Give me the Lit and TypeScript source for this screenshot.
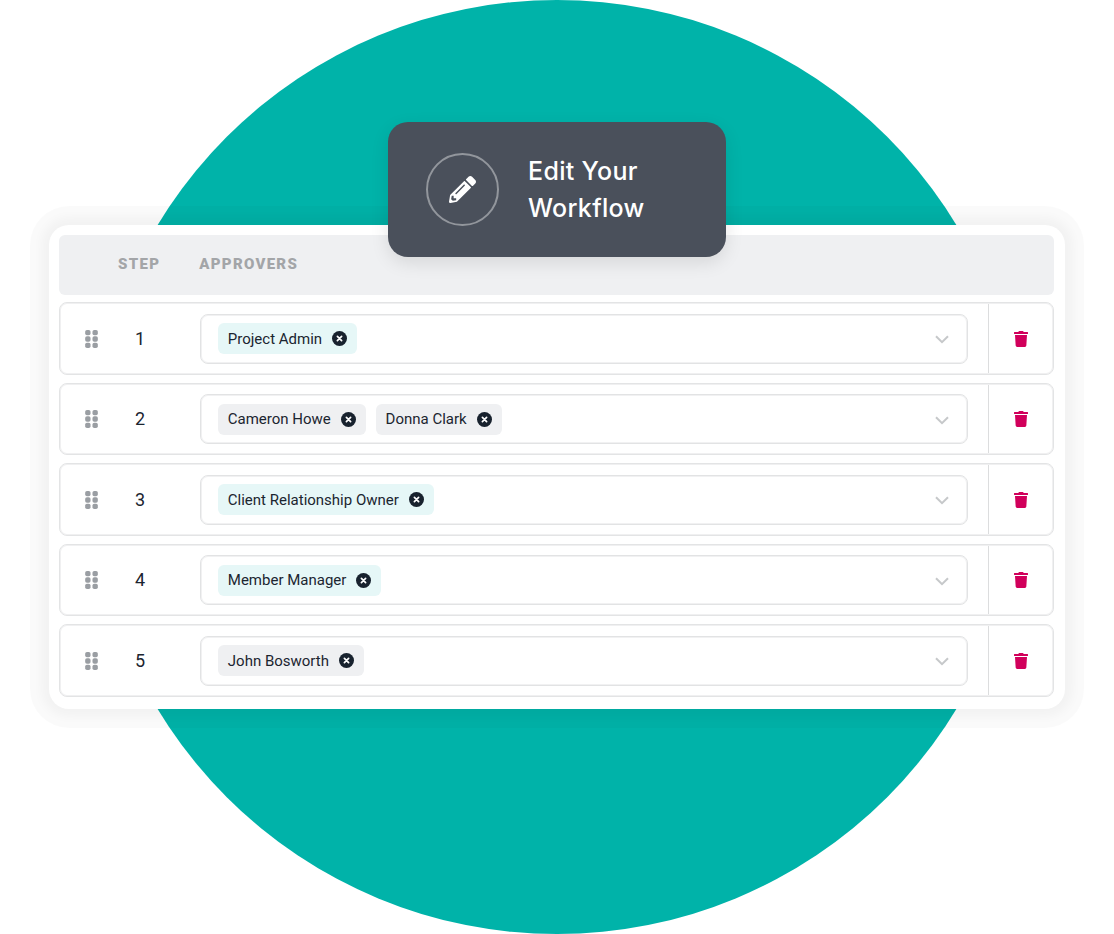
import { LitElement, html, css, svg } from "lit";
import { customElement } from "lit/decorators.js";

interface Chip { name: string; teal: boolean; }
const ROWS: Chip[][] = [
  [{ name: "Project Admin", teal: true }],
  [{ name: "Cameron Howe", teal: false }, { name: "Donna Clark", teal: false }],
  [{ name: "Client Relationship Owner", teal: true }],
  [{ name: "Member Manager", teal: true }],
  [{ name: "John Bosworth", teal: false }],
];

const PENCIL = "M497.9 142.1l-46.1 46.1c-4.7 4.7-12.3 4.7-17 0l-111-111c-4.7-4.7-4.7-12.3 0-17l46.1-46.1c18.7-18.7 49.1-18.7 67.9 0l60.1 60.1c18.8 18.7 18.8 49.1 0 67.9zM284.2 99.8L21.6 362.4.4 483.9c-2.9 16.4 11.4 30.6 27.8 27.8l121.5-21.3 262.6-262.6c4.7-4.7 4.7-12.3 0-17l-111-111c-4.8-4.7-12.4-4.7-17.1 0zM124.1 339.9c-5.5-5.5-5.5-14.3 0-19.8l154-154c5.5-5.5 14.3-5.5 19.8 0s5.5 14.3 0 19.8l-154 154c-5.5 5.5-14.3 5.5-19.8 0zM88 424h48v36.3l-64.5 11.3-31.1-31.1L51.7 376H88v48z";
const TRASH = "M432 32H312l-9.4-18.7A24 24 0 0 0 281.1 0H166.8a23.72 23.72 0 0 0-21.4 13.3L136 32H16A16 16 0 0 0 0 48v32a16 16 0 0 0 16 16h416a16 16 0 0 0 16-16V48a16 16 0 0 0-16-16zM53.2 467a48 48 0 0 0 47.9 45h245.8a48 48 0 0 0 47.9-45L416 128H32z";

@customElement("app-root")
export class AppRoot extends LitElement {
  static styles = css`
    :host { display: block; }
    .stage {
      position: relative; width: 1114px; height: 934px; overflow: hidden;
      background: #fff; box-sizing: border-box; padding: 225px 49px 0;
      font-family: Roboto, sans-serif; color: #1b2530;
    }
    .disc {
      position: absolute; left: 90px; top: 0; width: 934px; height: 934px;
      border-radius: 50%; background: #00b3a9;
    }
    .card {
      position: relative; box-sizing: border-box; width: 1016px; height: 484px;
      background: #fff; border-radius: 20px; padding: 10px 11px 10px 10px;
      box-shadow: 0 0 0 19px rgba(0,0,0,.02), 0 0 10px 8px rgba(0,0,0,.03);
      display: flex; flex-direction: column;
    }
    .head {
      height: 60px; flex: none; box-sizing: border-box; background: #eff0f2; border-radius: 6px;
      display: flex; align-items: center; gap: 39px; padding: 0 0 2px 59px;
      font-size: 15px; font-weight: 900; letter-spacing: 1.3px; color: #a3a5a8;
    }
    .rows { display: flex; flex-direction: column; gap: 8px; margin-top: 7.3px; }
    .row {
      height: 72.5px; box-sizing: border-box; border: 1px solid #e3e4e5; border-radius: 8px;
      box-shadow: inset 0 0 0 1px #f0f0f1; padding: 1px;
      display: flex; align-items: center;
    }
    .drag { width: 13px; height: 18px; margin-left: 24px; flex: none; display: block; }
    .num { width: 84px; margin-right: 18px; padding-bottom: 1px; text-align: center; font-size: 18px; flex: none; }
    .select {
      flex: 1; height: 50px; box-sizing: border-box; border: 1px solid #e2e3e4; border-radius: 8px;
      box-shadow: inset 0 0 0 1px #f1f1f2; padding: 0 18px 0 17px;
      display: flex; align-items: center; gap: 10px;
    }
    .chip {
      height: 31px; border-radius: 6px; display: flex; align-items: center; gap: 10px;
      padding: 0 10px 0 9.8px; font-size: 15px; white-space: nowrap; background: #eff0f2; color: #1b2530;
    }
    .chip.teal { background: #e6f7f7; }
    .x { width: 15px; height: 15px; display: block; flex: none; }
    .chev { margin-left: auto; margin-top: 2px; width: 14px; height: 9px; display: block; flex: none; }
    .del {
      width: 64px; box-sizing: border-box; padding-left: 1px; align-self: stretch; margin-left: 20px; border-left: 1px solid #dcddde; flex: none;
      display: flex; align-items: center; justify-content: center;
    }
    .del svg { width: 14px; height: 16px; display: block; fill: #d1005b; }
    .pop {
      position: absolute; left: 388px; top: 122px; width: 338px; height: 135px; box-sizing: border-box;
      background: #4a505b; border-radius: 20px; box-shadow: 0 6px 18px rgba(0,0,0,.1);
      display: flex; align-items: center; padding-left: 38px; gap: 29px;
      color: #fff; font-family: Inter, sans-serif; font-weight: 500; font-size: 25px; letter-spacing: .3px; line-height: 37px;
    }
    .ring {
      width: 73px; height: 73px; box-sizing: border-box; border: 2px solid rgba(255,255,255,.4); border-radius: 50%;
      display: flex; align-items: center; justify-content: center; flex: none;
    }
    .ring svg { width: 27px; height: 27px; fill: #fff; display: block; }
  `;

  private dragIcon() {
    const cells = [0, 6.5, 13].flatMap((y) => [0, 7.5].map((x) => svg`<rect x=${x} y=${y} width="5.5" height="5.5" rx="1.8" fill="#9a9ea3"></rect>`));
    return html`<svg class="drag" viewBox="0 0 13 18.5">${cells}</svg>`;
  }

  render() {
    return html`
      <div class="stage">
        <div class="disc"></div>
        <div class="card">
          <div class="head"><span>STEP</span><span>APPROVERS</span></div>
          <div class="rows">
            ${ROWS.map((chips, i) => html`
              <div class="row">
                ${this.dragIcon()}
                <div class="num">${i + 1}</div>
                <div class="select">
                  ${chips.map((c) => html`
                    <div class="chip ${c.teal ? "teal" : ""}">
                      <span>${c.name}</span>
                      <svg class="x" viewBox="0 0 15 15">
                        <circle cx="7.5" cy="7.5" r="7.5" fill="#18222e"></circle>
                        <path d="M5.4 5.4l4.2 4.2M9.6 5.4l-4.2 4.2" stroke="#fff" stroke-width="1.7" stroke-linecap="round"></path>
                      </svg>
                    </div>`)}
                  <svg class="chev" viewBox="0 0 14 9">
                    <path d="M1 1.2l6 6 6-6" fill="none" stroke="#c6c8ca" stroke-width="2"></path>
                  </svg>
                </div>
                <div class="del"><svg viewBox="0 0 448 512"><path d=${TRASH}></path></svg></div>
              </div>`)}
          </div>
        </div>
        <div class="pop">
          <div class="ring"><svg viewBox="0 0 512 512"><path d=${PENCIL}></path></svg></div>
          <div>Edit Your<br />Workflow</div>
        </div>
      </div>
    `;
  }
}
